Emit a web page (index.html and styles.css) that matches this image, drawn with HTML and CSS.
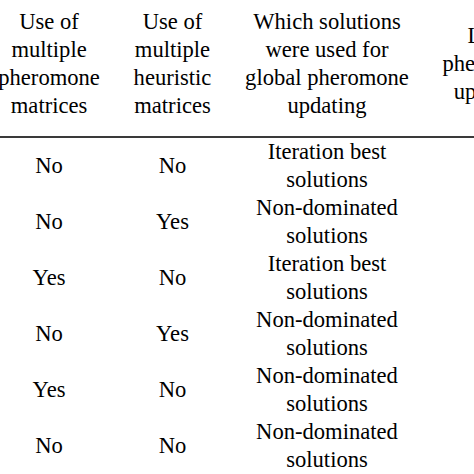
FILE: index.html
```html
<!DOCTYPE html>
<html lang="en">
<head>
<meta charset="utf-8">
<title>Table</title>
<link rel="stylesheet" href="styles.css">
</head>
<body>
<div class="table">
  <div class="row head">
    <div class="cell">Use of<br>multiple<br>pheromone<br>matrices</div>
    <div class="cell">Use of<br>multiple<br>heuristic<br>matrices</div>
    <div class="cell">Which solutions<br>were used for<br>global pheromone<br>updating</div>
    <div class="cell">Local<br>pheromone<br>updating</div>
  </div>
  <div class="row">
    <div class="cell">No</div>
    <div class="cell">No</div>
    <div class="cell">Iteration best<br>solutions</div>
    <div class="cell"></div>
  </div>
  <div class="row">
    <div class="cell">No</div>
    <div class="cell">Yes</div>
    <div class="cell">Non-dominated<br>solutions</div>
    <div class="cell"></div>
  </div>
  <div class="row">
    <div class="cell">Yes</div>
    <div class="cell">No</div>
    <div class="cell">Iteration best<br>solutions</div>
    <div class="cell"></div>
  </div>
  <div class="row">
    <div class="cell">No</div>
    <div class="cell">Yes</div>
    <div class="cell">Non-dominated<br>solutions</div>
    <div class="cell"></div>
  </div>
  <div class="row">
    <div class="cell">Yes</div>
    <div class="cell">No</div>
    <div class="cell">Non-dominated<br>solutions</div>
    <div class="cell"></div>
  </div>
  <div class="row">
    <div class="cell">No</div>
    <div class="cell">No</div>
    <div class="cell">Non-dominated<br>solutions</div>
    <div class="cell"></div>
  </div>
</div>
</body>
</html>
```
FILE: styles.css
```css
html, body {
  margin: 0;
  padding: 0;
  background: #ffffff;
}
body {
  width: 474px;
  height: 474px;
  overflow: hidden;
  font-family: "Liberation Serif", "Times New Roman", serif;
  font-size: 22.6px;
  line-height: 28px;
  color: #000000;
}
.table {
  margin-left: -18.6px;
  width: 579.6px;
}
.row {
  display: grid;
  grid-template-columns: 135.3px 111.6px 197.4px 135.3px;
  height: 56px;
  align-items: center;
}
.row.head {
  height: 112px;
  padding-top: 8px;
  padding-bottom: 16px;
  border-bottom: 2px solid #3a3a3a;
}
.cell {
  text-align: center;
  white-space: nowrap;
}
```
